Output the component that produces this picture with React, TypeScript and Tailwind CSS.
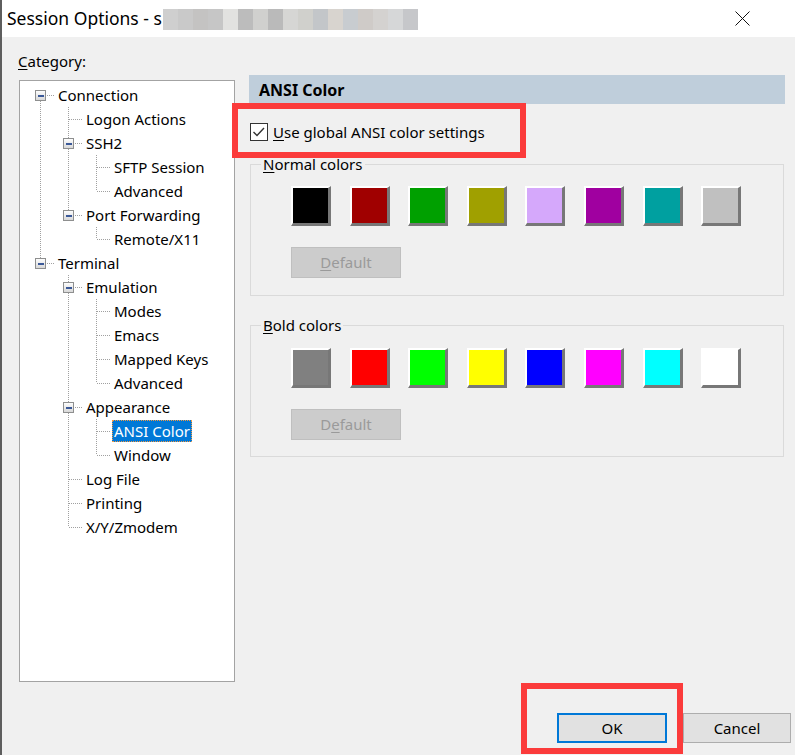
import React from 'react';

type TreeNode = { t: string; l: number; exp?: boolean; sel?: boolean };

const tree: TreeNode[] = [
  { t: 'Connection', l: 0, exp: true },
  { t: 'Logon Actions', l: 1 },
  { t: 'SSH2', l: 1, exp: true },
  { t: 'SFTP Session', l: 2 },
  { t: 'Advanced', l: 2 },
  { t: 'Port Forwarding', l: 1, exp: true },
  { t: 'Remote/X11', l: 2 },
  { t: 'Terminal', l: 0, exp: true },
  { t: 'Emulation', l: 1, exp: true },
  { t: 'Modes', l: 2 },
  { t: 'Emacs', l: 2 },
  { t: 'Mapped Keys', l: 2 },
  { t: 'Advanced', l: 2 },
  { t: 'Appearance', l: 1, exp: true },
  { t: 'ANSI Color', l: 2, sel: true },
  { t: 'Window', l: 2 },
  { t: 'Log File', l: 1 },
  { t: 'Printing', l: 1 },
  { t: 'X/Y/Zmodem', l: 1 },
];

const normalColors = ['#000000', '#a00000', '#00a000', '#a0a000', '#d5a8fb', '#a000a0', '#00a0a0', '#c0c0c0'];
const boldColors = ['#808080', '#ff0000', '#00ff00', '#ffff00', '#0000ff', '#ff00ff', '#00ffff', '#ffffff'];
const mosaic = ['#cfcfcf', '#c9c9c9', '#c4c3c2', '#c6c6c6', '#e2e2e0', '#bcbcbc', '#d0d0ce', '#bababa', '#d6d6d4', '#d0d0cc', '#c3c6c9', '#d8d4cf', '#c8ccd0', '#cfcbc8', '#d4d2d0', '#d6d7d8', '#c6c7ca'];

function hasNext(i: number) {
  const l = tree[i].l;
  for (let j = i + 1; j < tree.length; j++) {
    if (tree[j].l < l) return false;
    if (tree[j].l === l) return true;
  }
  return false;
}

function ancestor(i: number, level: number) {
  for (let j = i - 1; j >= 0; j--) if (tree[j].l === level) return j;
  return 0;
}

const dot = { stroke: '#a0a0a0', strokeWidth: 1, strokeDasharray: '1 1' };

function Cell({ i, lv }: { i: number; lv: number }) {
  const n = tree[i];
  if (lv < n.l) {
    const cont = hasNext(ancestor(i, lv));
    return (
      <svg width="28" height="24" className="block shrink-0" shapeRendering="crispEdges">
        {cont && <line x1="14.5" y1="0" x2="14.5" y2="24" {...dot} />}
      </svg>
    );
  }
  const next = hasNext(i);
  return (
    <svg width="28" height="24" className="block shrink-0" shapeRendering="crispEdges">
      {i !== 0 && <line x1="14.5" y1="0" x2="14.5" y2="12" {...dot} />}
      {next && <line x1="14.5" y1="12" x2="14.5" y2="24" {...dot} />}
      <line x1="15" y1="12.5" x2="28" y2="12.5" {...dot} />
      {n.exp && (
        <g>
          <defs>
            <linearGradient id={`g${i}`} x1="0" y1="0" x2="0" y2="1">
              <stop offset="0" stopColor="#ffffff" />
              <stop offset="1" stopColor="#d6d6d6" />
            </linearGradient>
          </defs>
          <rect x="9.5" y="7.5" width="10" height="10" rx="1" fill={`url(#g${i})`} stroke="#8e8f8f" />
          <rect x="11.5" y="12" width="6" height="1.5" fill="#3b5998" />
        </g>
      )}
    </svg>
  );
}

function TreeRow({ i }: { i: number }) {
  const n = tree[i];
  const cells = [];
  for (let lv = 0; lv <= n.l; lv++) cells.push(<Cell key={lv} i={i} lv={lv} />);
  return (
    <div className="flex h-[24px] items-center pl-[6px]">
      {cells}
      {n.sel ? (
        <span className="ml-[2px] h-[22px] px-[1px] leading-[20px] bg-[#0078d7] text-white border border-dotted border-[#f39a42] whitespace-nowrap">
          {n.t}
        </span>
      ) : (
        <span className="ml-[2px] h-[22px] px-[2px] leading-[22px] whitespace-nowrap">{n.t}</span>
      )}
    </div>
  );
}

function Swatch({ color }: { color: string }) {
  return (
    <div className="w-[40px] h-[40px] shrink-0 border-t-2 border-l-2 border-white border-r-[3px] border-b-[3px] border-r-[#777777] border-b-[#777777]">
      <div className="w-full h-full" style={{ backgroundColor: color }} />
    </div>
  );
}

function ColorGroup({ label, colors, def, pt, pb }: { label: React.ReactNode; colors: string[]; def: React.ReactNode; pt: string; pb: string }) {
  return (
    <div className={`relative ml-px w-[534px] border border-[#dadada] pl-[40px] ${pt} ${pb}`}>
      <span className="absolute -top-[11px] left-[10px] px-[2px] leading-[20px] bg-[#f0f0f0]">{label}</span>
      <div className="flex gap-[18.6px]">
        {colors.map((c, k) => (
          <Swatch key={k} color={c} />
        ))}
      </div>
      <div className="mt-[21px] w-[110px] h-[31px] border border-[#bfbfbf] bg-[#cccccc] text-[#9a9a9a] flex items-center justify-center">
        {def}
      </div>
    </div>
  );
}

export default function App() {
  return (
    <div className="w-[795px] h-[755px] flex bg-[#f0f0f0] overflow-hidden text-[15px] text-black font-['Noto_Sans',sans-serif]">
      <div className="w-[2px] shrink-0 bg-[#5e5e5e]" />
      <div className="relative flex-1 flex flex-col">
        {/* Title bar */}
        <div className="h-[37px] shrink-0 bg-white flex items-center pl-[5px] pr-[45px]">
          <span className="text-[17.5px] whitespace-nowrap">Session Options - s</span>
          <div className="flex ml-[1px] h-[21px] mt-[2px]">
            {mosaic.map((c, k) => (
              <div key={k} className="w-[15px] h-full" style={{ backgroundColor: c }} />
            ))}
          </div>
          <svg width="15" height="15" className="ml-auto" shapeRendering="geometricPrecision">
            <line x1="0.5" y1="0.5" x2="14.5" y2="14.5" stroke="#111" strokeWidth="1" />
            <line x1="14.5" y1="0.5" x2="0.5" y2="14.5" stroke="#111" strokeWidth="1" />
          </svg>
        </div>

        {/* Body */}
        <div className="flex pl-[17px]">
          {/* Category column */}
          <div className="w-[216px] shrink-0 pt-[14px]">
            <div className="-ml-px leading-[20px]">
              <span className="underline underline-offset-2">C</span>ategory:
            </div>
            <div className="mt-[9px] h-[602px] w-[216px] border border-[#a3a3a3] bg-white pt-[2px] overflow-hidden">
              {tree.map((_, i) => (
                <TreeRow key={i} i={i} />
              ))}
            </div>
          </div>

          {/* Settings panel */}
          <div className="ml-[14px] w-[536px] pt-[38px]">
            <div className="h-[29px] bg-[#bfcedb] pl-[10px] flex items-center font-bold text-[16px]">ANSI Color</div>
            <div className="mt-[18px] h-[20px] ml-px flex items-center">
              <svg width="18" height="18" className="shrink-0">
                <rect x="0.5" y="0.5" width="17" height="17" fill="#fff" stroke="#333" />
                <path d="M3.5 9 L7 12.5 L14 5" fill="none" stroke="#333" strokeWidth="1.4" />
              </svg>
              <span className="ml-[5px] whitespace-nowrap">
                <span className="underline underline-offset-2">U</span>se global ANSI color settings
              </span>
            </div>
            <div className="mt-[22px]">
              <ColorGroup
                label={<><span className="underline underline-offset-2">N</span>ormal colors</>}
                colors={normalColors}
                def={<><span className="underline underline-offset-2">D</span>efault</>}
                pt="pt-[21px]"
                pb="pb-[17px]"
              />
            </div>
            <div className="mt-[29px]">
              <ColorGroup
                label={<><span className="underline underline-offset-2">B</span>old colors</>}
                colors={boldColors}
                def={<>D<span className="underline underline-offset-2">e</span>fault</>}
                pt="pt-[22px]"
                pb="pb-[16px]"
              />
            </div>
          </div>
        </div>

        {/* Buttons */}
        <div className="mt-[31px] flex justify-end gap-[16px] pr-[4px]">
          <div className="w-[110px] h-[30px] border-2 border-[#0078d7] bg-[#e1e1e1] flex items-center justify-center">OK</div>
          <div className="w-[108px] h-[30px] border border-[#adadad] bg-[#e1e1e1] flex items-center justify-center">Cancel</div>
        </div>

        {/* Annotation boxes */}
        <div className="absolute left-[230px] top-[103px] w-[294px] h-[55px] border-[6px] border-[#fb3b3b]" />
        <div className="absolute left-[519px] top-[683px] w-[162px] h-[71px] border-[6px] border-[#fb3b3b]" />
      </div>
    </div>
  );
}
